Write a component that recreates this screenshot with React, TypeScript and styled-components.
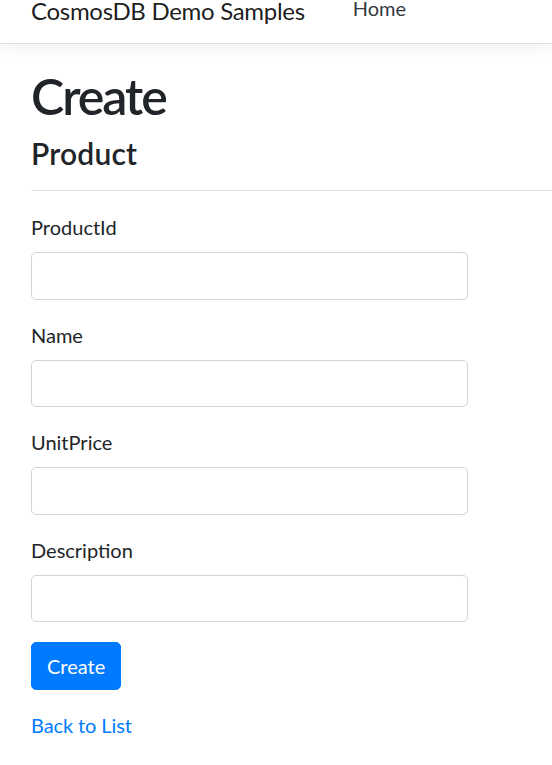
import React from 'react';
import styled, { createGlobalStyle } from 'styled-components';

const GlobalStyle = createGlobalStyle`
  html, body {
    margin: 0;
    padding: 0;
    background: #fff;
  }
  body {
    font-family: Lato, 'Open Sans', sans-serif;
    color: #212529;
    overflow: hidden;
  }
  * {
    box-sizing: border-box;
  }
`;

const Navbar = styled.header`
  height: 44px;
  display: flex;
  align-items: flex-start;
  gap: 48px;
  padding: 0 31px;
  border-bottom: 1px solid #dcdcdc;
  box-shadow: 0 5px 15px rgba(0, 0, 0, 0.05);
  overflow: hidden;
`;

const Brand = styled.a`
  font-size: 24px;
  line-height: 21px;
  letter-spacing: -0.3px;
  color: rgba(0, 0, 0, 0.9);
  text-decoration: none;
  white-space: nowrap;
`;

const NavLink = styled.a`
  font-size: 20px;
  line-height: 16px;
  color: #343a40;
  text-decoration: none;
`;

const Main = styled.main`
  padding: 22px 0 0 31px;
`;

const Title = styled.h1`
  margin: 0 0 9px;
  font-size: 50px;
  line-height: 60px;
  letter-spacing: -2px;
  font-weight: 600;
`;

const Subtitle = styled.h4`
  margin: 0 0 19px;
  font-size: 30px;
  line-height: 36px;
  letter-spacing: 0.2px;
  font-weight: 600;
`;

const Rule = styled.hr`
  margin: 0 0 21px;
  border: 0;
  border-top: 1px solid #e2e2e2;
`;

const Form = styled.form`
  width: 437px;
`;

const FormGroup = styled.div`
  margin-bottom: 20px;
`;

const Label = styled.label`
  display: block;
  margin-bottom: 10px;
  font-size: 20px;
  line-height: 30px;
  color: #212529;
`;

const Input = styled.input`
  display: block;
  width: 100%;
  height: 47.5px;
  padding: 7px 15px;
  font-family: inherit;
  font-size: 20px;
  border: 1px solid #ced4da;
  border-radius: 5px;
  background: #fff;
`;

const Button = styled.button`
  height: 47.5px;
  padding: 0 15px;
  font-family: inherit;
  font-size: 20px;
  color: #fff;
  background: #007bff;
  border: 1px solid #007bff;
  border-radius: 5px;
  cursor: pointer;
`;

const BackLink = styled.a`
  display: block;
  font-size: 20px;
  line-height: 30px;
  letter-spacing: -0.1px;
  color: #007bff;
  text-decoration: none;
`;

const fields = ['ProductId', 'Name', 'UnitPrice', 'Description'];

export default function App() {
  return (
    <>
      <GlobalStyle />
      <Navbar>
        <Brand href="#">CosmosDB Demo Samples</Brand>
        <NavLink href="#">Home</NavLink>
      </Navbar>
      <Main>
        <Title>Create</Title>
        <Subtitle>Product</Subtitle>
        <Rule />
        <Form onSubmit={(e) => e.preventDefault()}>
          {fields.map((field) => (
            <FormGroup key={field}>
              <Label htmlFor={field}>{field}</Label>
              <Input id={field} type="text" />
            </FormGroup>
          ))}
          <FormGroup>
            <Button type="submit">Create</Button>
          </FormGroup>
        </Form>
        <BackLink href="#">Back to List</BackLink>
      </Main>
    </>
  );
}
